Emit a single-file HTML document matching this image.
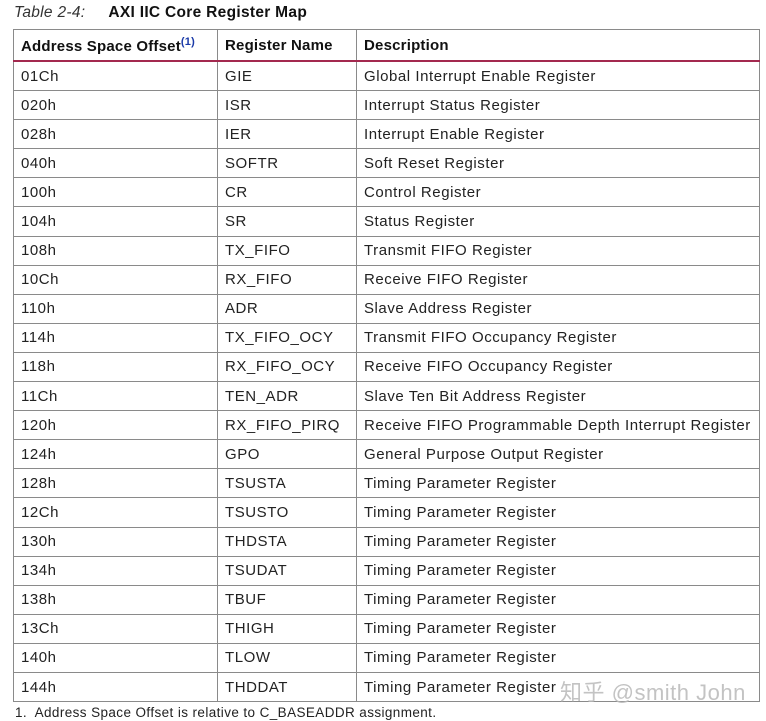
<!DOCTYPE html>
<html><head><meta charset="utf-8"><style>
body{margin:0;background:#fff;width:766px;height:721px;overflow:hidden;font-family:"Liberation Sans","Noto Sans CJK SC",sans-serif;color:#222;position:relative}
.cap{position:absolute;left:14px;top:4px;font-size:15.5px;}
.cap i{color:#333;margin-right:23px;letter-spacing:0.3px}
.cap b{color:#111;letter-spacing:0.3px}
table{position:absolute;left:13px;top:29px;border-collapse:collapse;width:747px;font-size:15px}
td,th{border:1px solid #8a8a8a;padding:0 0 0 7px;text-align:left;height:28.1px;white-space:nowrap}
td{letter-spacing:0.55px}
th{height:30px;font-weight:bold;color:#111;border-bottom:2px solid #a3294f;letter-spacing:0.2px}
sup{color:#1a3aa8;font-size:11px}
.c1{width:196px}.c2{width:131px}
.foot{position:absolute;left:15px;top:705px;font-size:13.5px;color:#222;letter-spacing:0.4px}
.wm{position:absolute;left:560px;top:675px;font-size:22px;color:rgba(185,185,185,.85);letter-spacing:0.5px}
</style></head><body>
<div class="cap"><i>Table 2-4:</i><b>AXI IIC Core Register Map</b></div>
<table>
<tr><th class="c1">Address Space Offset<sup>(1)</sup></th><th class="c2">Register Name</th><th>Description</th></tr>
<tr><td>01Ch</td><td>GIE</td><td>Global Interrupt Enable Register</td></tr>
<tr><td>020h</td><td>ISR</td><td>Interrupt Status Register</td></tr>
<tr><td>028h</td><td>IER</td><td>Interrupt Enable Register</td></tr>
<tr><td>040h</td><td>SOFTR</td><td>Soft Reset Register</td></tr>
<tr><td>100h</td><td>CR</td><td>Control Register</td></tr>
<tr><td>104h</td><td>SR</td><td>Status Register</td></tr>
<tr><td>108h</td><td>TX_FIFO</td><td>Transmit FIFO Register</td></tr>
<tr><td>10Ch</td><td>RX_FIFO</td><td>Receive FIFO Register</td></tr>
<tr><td>110h</td><td>ADR</td><td>Slave Address Register</td></tr>
<tr><td>114h</td><td>TX_FIFO_OCY</td><td>Transmit FIFO Occupancy Register</td></tr>
<tr><td>118h</td><td>RX_FIFO_OCY</td><td>Receive FIFO Occupancy Register</td></tr>
<tr><td>11Ch</td><td>TEN_ADR</td><td>Slave Ten Bit Address Register</td></tr>
<tr><td>120h</td><td>RX_FIFO_PIRQ</td><td>Receive FIFO Programmable Depth Interrupt Register</td></tr>
<tr><td>124h</td><td>GPO</td><td>General Purpose Output Register</td></tr>
<tr><td>128h</td><td>TSUSTA</td><td>Timing Parameter Register</td></tr>
<tr><td>12Ch</td><td>TSUSTO</td><td>Timing Parameter Register</td></tr>
<tr><td>130h</td><td>THDSTA</td><td>Timing Parameter Register</td></tr>
<tr><td>134h</td><td>TSUDAT</td><td>Timing Parameter Register</td></tr>
<tr><td>138h</td><td>TBUF</td><td>Timing Parameter Register</td></tr>
<tr><td>13Ch</td><td>THIGH</td><td>Timing Parameter Register</td></tr>
<tr><td>140h</td><td>TLOW</td><td>Timing Parameter Register</td></tr>
<tr><td>144h</td><td>THDDAT</td><td>Timing Parameter Register</td></tr>
</table>
<div class="wm">知乎 @smith John</div>
<div class="foot">1.&nbsp; Address Space Offset is relative to C_BASEADDR assignment.</div>
</body></html>
